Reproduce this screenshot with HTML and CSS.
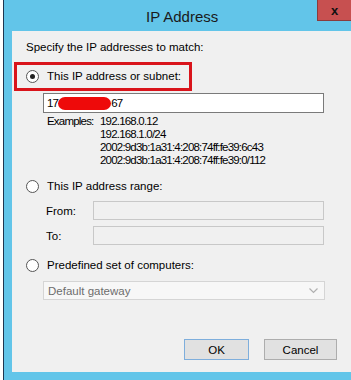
FILE: index.html
```html
<!DOCTYPE html>
<html>
<head>
<meta charset="utf-8">
<link rel="stylesheet" href="styles.css">
</head>
<body>
<div class="desk">
  <div class="window">
    <div class="titlebar">
      <span class="title">IP Address</span>
      <span class="close">x</span>
    </div>
    <div class="client">
      <div class="intro">Specify the IP addresses to match:</div>
      <div class="highlight">
        <span class="radio checked"></span>
        <span class="label">This IP address or subnet:</span>
      </div>
      <div class="textbox"><span>17</span><span class="redact"></span><span>67</span></div>
      <div class="examples">
        <span class="ex-label">Examples:</span>
        <div class="ex-values">
          <span>192.168.0.12</span>
          <span>192.168.1.0/24</span>
          <span>2002:9d3b:1a31:4:208:74ff:fe39:6c43</span>
          <span>2002:9d3b:1a31:4:208:74ff:fe39:0/112</span>
        </div>
      </div>
      <div class="option opt-range">
        <span class="radio"></span>
        <span class="label">This IP address range:</span>
      </div>
      <div class="range">
        <div class="range-row"><span class="range-label">From:</span><span class="field"></span></div>
        <div class="range-row"><span class="range-label">To:</span><span class="field"></span></div>
      </div>
      <div class="option opt-predef">
        <span class="radio"></span>
        <span class="label">Predefined set of computers:</span>
      </div>
      <div class="combo">
        <span class="combo-text">Default gateway</span>
        <svg class="chev" width="9" height="6" viewBox="0 0 9 6"><path d="M0.5 0.5 L4.5 4.5 L8.5 0.5" fill="none" stroke="#b0b0b0" stroke-width="1.2"/></svg>
      </div>
      <div class="buttons">
        <span class="btn btn-default">OK</span>
        <span class="btn">Cancel</span>
      </div>
    </div>
  </div>
</div>
</body>
</html>
```

FILE: styles.css
```css
html, body {
  margin: 0;
  padding: 0;
  overflow: hidden;
}
body {
  width: 351px;
  height: 380px;
  background: #ffffff;
  font-family: "Liberation Sans", Arial, sans-serif;
  font-size: 11.5px;
  color: #000;
}
.desk {
  display: flex;
  padding-left: 3px;
  height: 380px;
  width: 348px;
}
.window {
  flex: 1;
  height: 380px;
  border-left: 1px solid #1e3550;
  background: #62c5e9;
  display: flex;
  flex-direction: column;
  position: relative;
}
.titlebar {
  height: 31px;
  flex: none;
  display: flex;
  align-items: center;
  justify-content: flex-start;
  padding-left: 142px;
}
.title {
  font-size: 15px;
  color: #1a1a1a;
  margin-top: 1px;
}
.close {
  position: absolute;
  top: 0;
  right: 0;
  width: 33px;
  height: 20px;
  background: #c75050;
  border-left: 1px solid #8a3c3c;
  border-bottom: 1px solid #8a3c3c;
  color: #111;
  font-weight: bold;
  font-size: 13px;
  display: flex;
  align-items: center;
  justify-content: center;
  line-height: 1;
}
.client {
  flex: 1;
  margin: 0 0 8px 8px;
  background: #f0f0f0;
  display: flex;
  flex-direction: column;
  padding: 9px 0 12px 2px;
}
.intro {
  margin-left: 12px;
  height: 15px;
  line-height: 15px;
}
.highlight {
  margin-top: 7px;
  width: 163px;
  height: 23px;
  border: 3px solid #d9141b;
  display: flex;
  align-items: center;
  padding-left: 9px;
}
.radio {
  width: 11px;
  height: 11px;
  border: 1px solid #555;
  border-radius: 50%;
  background: #fff;
  flex: none;
  display: flex;
  align-items: center;
  justify-content: center;
}
.radio.checked::after {
  content: "";
  width: 5px;
  height: 5px;
  border-radius: 50%;
  background: #222;
}
.label {
  margin-left: 8px;
  line-height: 15px;
}
.textbox {
  margin-left: 29px;
  margin-top: 2px;
  width: 276px;
  height: 18px;
  border: 1px solid #7a7a7a;
  background: #fff;
  display: flex;
  align-items: center;
  padding-left: 3px;
  letter-spacing: -0.8px;
}
.redact {
  width: 53px;
  height: 13px;
  background: #ee0a0a;
  border-radius: 7px / 6.5px;
}
.examples {
  display: flex;
  margin-left: 33px;
  margin-top: 2px;
  line-height: 13px;
  letter-spacing: -0.8px;
}
.ex-label {
  width: 53px;
  flex: none;
}
.ex-values {
  display: flex;
  flex-direction: column;
}
.option {
  display: flex;
  align-items: center;
  margin-left: 12px;
  height: 15px;
}
.opt-range {
  margin-top: 12px;
}
.range {
  display: flex;
  flex-direction: column;
  gap: 6px;
  margin-top: 7px;
  margin-left: 32px;
}
.range-row {
  display: flex;
  align-items: center;
}
.range-label {
  width: 47px;
}
.field {
  width: 229px;
  height: 17px;
  border: 1px solid #c8c8c8;
  background: #f0f0f0;
}
.opt-predef {
  margin-top: 13px;
}
.combo {
  margin-left: 29px;
  margin-top: 8px;
  width: 270px;
  height: 17px;
  border: 1px solid #d5d5d5;
  background: #f7f7f7;
  display: flex;
  align-items: center;
  justify-content: space-between;
  padding: 0 6px 0 4px;
  color: #6d6d6d;
}
.chev {
  display: block;
}
.buttons {
  margin-top: auto;
  display: flex;
  justify-content: flex-end;
  gap: 15px;
  padding-right: 14px;
}
.btn {
  width: 71px;
  height: 19px;
  border: 1px solid #adadad;
  background: #e1e1e1;
  display: flex;
  align-items: center;
  justify-content: center;
}
.btn-default {
  width: 63px;
  border-color: #7eaedc;
}
```
